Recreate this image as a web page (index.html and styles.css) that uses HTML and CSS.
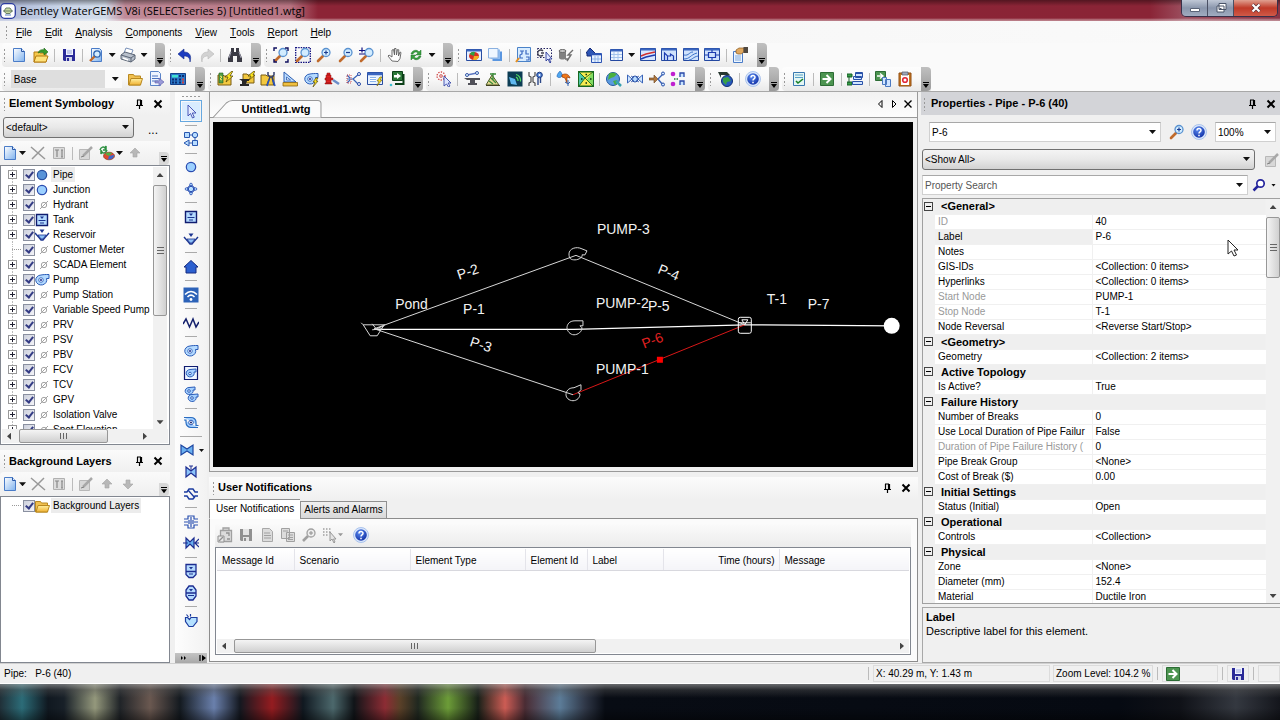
FILE: index.html
```html
<!DOCTYPE html>
<html lang="en">
<head>
<meta charset="utf-8">
<title>Bentley WaterGEMS V8i (SELECTseries 5) [Untitled1.wtg]</title>
<link rel="stylesheet" href="styles.css">
</head>
<body>
<svg class="defs" aria-hidden="true">
<defs>
<linearGradient id="g-page" x1="0" y1="0" x2="1" y2="1"><stop offset="0" stop-color="#fff"/><stop offset="1" stop-color="#7fb2ee"/></linearGradient>
<linearGradient id="g-fold" x1="0" y1="0" x2="0" y2="1"><stop offset="0" stop-color="#fff0a0"/><stop offset="1" stop-color="#f0b030"/></linearGradient>
<radialGradient id="g-help" cx=".4" cy=".3" r=".8"><stop offset="0" stop-color="#5c8cf0"/><stop offset="1" stop-color="#0a28a0"/></radialGradient>
</defs>
<symbol id="new" viewBox="0 0 16 16"><path d="M2.500 1.500h8l3 3v10h-11z" fill="url(#g-page)" stroke="#4a7cc8"/><path d="M10.500 1.500v3h3" fill="#dceaff" stroke="#2a58a8"/></symbol>
<symbol id="open" viewBox="0 0 16 16"><path d="M1 5h5l1 1h6v9H1z" fill="#f5c94c" stroke="#b47a10"/><path d="M3 9h12l-2 6H1z" fill="#ffe27a" stroke="#b47a10"/><path d="M5 6c1-3 4-4 6-3V1l4 4-4 3V6c-2-1-4-1-6 0z" fill="#3a9a2a" stroke="#1c6a18" stroke-width=".6"/></symbol>
<symbol id="save" viewBox="0 0 16 16"><path d="M2 2h12v12H3l-1-1z" fill="#2a2a98"/><path d="M5 2h7v6H5z" fill="#eef2ff"/><path d="M6 4h5M6 6h5" stroke="#9aa4d8"/><path d="M5 10h6v4H5z" fill="#cfd4ea"/><path d="M6 11h2v3H6z" fill="#2a2a98"/></symbol>
<symbol id="save-g" viewBox="0 0 16 16"><path d="M2 2h12v12H3l-1-1z" fill="#909090"/><path d="M5 2h6v6H5zM5 10h6v4H5z" fill="#e4e4e4"/><path d="M6 11h2v3H6z" fill="#909090"/></symbol>
<symbol id="preview" viewBox="0 0 16 16"><path d="M3.500 1.500h8l2 2v11h-10z" fill="url(#g-page)" stroke="#4a7cc8"/><circle cx="9" cy="7" r="3.200" fill="#d4ecff" stroke="#2a62b0" stroke-width="1.300"/><path d="M6.500 9.500L2 14" stroke="#c06a2c" stroke-width="2.400"/></symbol>
<symbol id="print" viewBox="0 0 16 16"><path d="M6 1l7 2-2 5-7-2z" fill="#fff" stroke="#7890b8"/><path d="M1 8l4-3 10 3v4l-4 3L1 12z" fill="#b8c0cc" stroke="#5a6474"/><path d="M1 8l10 3 4-3M11 11v4" fill="none" stroke="#5a6474"/><path d="M3 11l5 2" stroke="#fff" stroke-width="1.500"/></symbol>
<symbol id="undo" viewBox="0 0 16 16"><path d="M1 7l6-5v3c5 0 8 3 6 10 0-4-2-6-6-6v3z" fill="#1c3cc0" stroke="#102a88" stroke-width=".6"/></symbol>
<symbol id="redo" viewBox="0 0 16 16"><path d="M15 7L9 2v3C4 5 1 8 3 15c0-4 2-6 6-6v3z" fill="#d2d2d2" stroke="#b8b8b8" stroke-width=".6"/></symbol>
<symbol id="find" viewBox="0 0 16 16"><path d="M4 1h3v4h2V1h3v3l3 7v4h-5V9H6v6H1v-4l3-7z" fill="#3a3a44"/><path d="M4 5l-2 6M12 5l2 6" stroke="#9a9aaa"/></symbol>
<symbol id="lens" viewBox="0 0 16 16"><path d="M7 9L2 14" stroke="#c06a2c" stroke-width="2.600" stroke-linecap="round"/><circle cx="10" cy="5.500" r="4" fill="#d2ecff" stroke="#5a92d0" stroke-width="1.300"/></symbol>
<symbol id="zoom-ext" viewBox="0 0 16 16"><use href="#lens"/><path d="M1 4V1h3M12 1h3v3M15 12v3h-3M4 15H1v-3" fill="none" stroke="#101060" stroke-width="1.400"/></symbol>
<symbol id="zoom-win" viewBox="0 0 16 16"><path d="M.7.700h14.600v14.600H.7z" fill="none" stroke="#101080" stroke-width="1.300" stroke-dasharray="1.500 1"/><use href="#lens"/></symbol>
<symbol id="zoom-in" viewBox="0 0 16 16"><use href="#lens"/><path d="M8 5.500h4M10 3.500v4" stroke="#1c3c90" stroke-width="1.200"/></symbol>
<symbol id="zoom-out" viewBox="0 0 16 16"><use href="#lens"/><path d="M8 5.500h4" stroke="#1c3c90" stroke-width="1.200"/></symbol>
<symbol id="zoom-rt" viewBox="0 0 16 16"><use href="#lens"/><path d="M0 3.500h6M3 .5v5M0 7h6" stroke="#101080" stroke-width="1.200"/></symbol>
<symbol id="zoom-g" viewBox="0 0 16 16"><path d="M7 9L2 14" stroke="#a0a0a0" stroke-width="2.600"/><circle cx="10" cy="6" r="4" fill="#eee" stroke="#a0a0a0" stroke-width="1.300"/><path d="M8 6h4M10 4v4" stroke="#909090"/></symbol>
<symbol id="pan" viewBox="0 0 16 16"><path d="M5 14l-4-5 1-1 3 2V3l1.500-.5L7.500 8V1.500H9L9.500 8l1-5.500 1.300.3L11.500 9l1.500-4 1 .5-1 6-2 3z" fill="#fff" stroke="#606060" stroke-width=".9"/></symbol>
<symbol id="refresh" viewBox="0 0 16 16"><path d="M3 7c1-4 6-5 8-2l2-2v5H8l2-2C8 4 6 5 5 7zM13 9c-1 4-6 5-8 2l-2 2V8h5l-2 2c2 2 4 1 5-1z" fill="#3aa040" stroke="#1c7028" stroke-width=".5"/></symbol>
<symbol id="color" viewBox="0 0 16 16"><path d="M.5 2.500h15v11H.5z" fill="#e8f0ff" stroke="#284ca0"/><path d="M.5 2.500h15v2H.5z" fill="#3a66c0"/><ellipse cx="8" cy="9" rx="5" ry="4" fill="#d83020"/><path d="M8 9L3.500 7A5 4 0 0 1 9 5z" fill="#30a040"/><path d="M8 9l5 0a5 4 0 0 1-6 4z" fill="#f0b020"/></symbol>
<symbol id="layers" viewBox="0 0 16 16"><path d="M5.500 4.500h9.500v9.500H5.500z" fill="#5a96e0"/><path d="M3.500 2.500h9.500v9.500H3.500z" fill="#8fbcf0"/><path d="M1.500 1.500h9.500v9.500H1.500z" fill="#eef6ff" stroke="#8ab0e0"/></symbol>
<symbol id="model" viewBox="0 0 16 16"><path d="M2.500.5h13v14h-13z" fill="#d8ecff" stroke="#4a82c8"/><path d="M5 4h4M7 4v3l-2 1v3h3M11 3v4h3M11 10h3v3h-3" fill="none" stroke="#3a68c0" stroke-width="1.200"/><path d="M4 11l-3 4" stroke="#e89020" stroke-width="2"/></symbol>
<symbol id="select-poly" viewBox="0 0 16 16"><path d="M.5 1.500h14v9H.5z" fill="none" stroke="#202060" stroke-dasharray="1.500 1.500"/><path d="M6 4a3 3 0 1 0 0 4M4 6h3" fill="none" stroke="#404050" stroke-width="1.300"/><path d="M9 5v9l2-2 2 4 1-1-2-3h3z" fill="#dfe6ff" stroke="#2a3a98" stroke-width=".9"/></symbol>
<symbol id="tank-bolt" viewBox="0 0 16 16"><path d="M1 4v7c1 2 6 2 7 0V4z" fill="#808080"/><ellipse cx="4.500" cy="4" rx="3.500" ry="1.500" fill="#c8c8c8" stroke="#666"/><path d="M15 3l-5 5h3l-4 6M7 12h4" fill="none" stroke="#707070" stroke-width="1.400"/></symbol>
<symbol id="house-table" viewBox="0 0 16 16"><path d="M0 6l4-5 5 5H8v3H1V6z" fill="#2c54b4" stroke="#142a78"/><path d="M5.500 6.500h10v9h-10z" fill="#e4f0ff" stroke="#2c54b4"/><path d="M5.500 7.500h10" stroke="#2c54b4" stroke-width="1.600"/><path d="M9 9v6M12 9v6M6 12h9" stroke="#7fa4e0" stroke-width=".8"/></symbol>
<symbol id="table" viewBox="0 0 16 16"><path d="M2.500 2.500h12v11h-12z" fill="#eef6ff" stroke="#2448a0"/><path d="M2.500 3.500h12" stroke="#3a66c0" stroke-width="2"/><path d="M6 5v8M10 5v8M3 7.500h11M3 10.500h11" stroke="#a4c4ec"/></symbol>
<symbol id="graph" viewBox="0 0 16 16"><path d="M.5 1.500h15v12H.5z" fill="#d8e8ff" stroke="#2448a0"/><path d="M.5 2.500h15" stroke="#3a66c0" stroke-width="2"/><path d="M1 9l5-2 9-2" stroke="#d03030" stroke-width="1.400" fill="none"/><path d="M1 12l5-2 9-2" stroke="#1c3cb0" fill="none" stroke-width="1.400"/></symbol>
<symbol id="profile" viewBox="0 0 16 16"><path d="M.5 1.500h15v12H.5z" fill="#cfe2fc" stroke="#2448a0"/><path d="M.5 2.500h15" stroke="#3a66c0" stroke-width="2"/><path d="M3.500 13V6l3 3h3v-2l3 2v4M6.500 9v4" stroke="#1c3cb0" fill="none" stroke-width="1.200"/></symbol>
<symbol id="contour" viewBox="0 0 16 16"><path d="M.5 1.500h15v12H.5z" fill="#cfe2fc" stroke="#2448a0"/><path d="M.5 2.500h15" stroke="#3a66c0" stroke-width="2"/><path d="M1 8c5 1 5-3 9-3M1 12c6 0 6-4 13-6M6 13c3 0 4-3 9-4" stroke="#3a72c8" fill="none"/></symbol>
<symbol id="aerial" viewBox="0 0 16 16"><path d="M.5 1.500h15v12H.5z" fill="#cfe2fc" stroke="#2448a0"/><path d="M.5 2.500h15" stroke="#3a66c0" stroke-width="2"/><path d="M4.500 5.500h7v5h-7zM8 3v3M8 10v3M1 8h3M12 8h3" stroke="#1c3cb0" fill="none" stroke-width="1.200"/></symbol>
<symbol id="props" viewBox="0 0 16 16"><path d="M1.500 4.500h9v11h-9z" fill="#eef6ff" stroke="#4a7cc8"/><path d="M3 9h6M3 11h6M3 13h6" stroke="#7fa8dc"/><path d="M4 3l3-2h5v4l-3 2H6L4 6z" fill="#e0a860" stroke="#8a5a20" stroke-width=".7"/><path d="M11.500 0H16v6h-4.500z" fill="#504840"/></symbol>
<symbol id="folder" viewBox="0 0 16 16"><path d="M1.500 3.500h5l1 1.500h6v9h-12z" fill="#f0c050" stroke="#b88820"/><path d="M4 7.500h11.500l-2 6.500H2z" fill="url(#g-fold)" stroke="#b88820"/></symbol>
<symbol id="alt" viewBox="0 0 16 16"><path d="M2.500.5h8l2 2v12h-10z" fill="#eef4ff" stroke="#5a84c8"/><path d="M4 5h6M4 7.500h7M4 10h6" stroke="#4a72c0"/><path d="M7 10h4V7l5 4-5 4v-3H7z" fill="#9a9ad8" stroke="#5a5aa8" stroke-width=".6"/></symbol>
<symbol id="calc" viewBox="0 0 16 16"><path d="M.5 2.500h15v11H.5z" fill="#2a78c8" stroke="#14408a"/><path d="M2 4h6v2.500H2z" fill="#40e0d0"/><path d="M2 8.500h2M5 8.500h2M9 5h2M12 5h2M9 8.500h2M2 11.500h2M5 11.500h2M9 11.500h2" stroke="#0c2c70" stroke-width="1.800"/><path d="M12 8.500h2M12 11.500h2" stroke="#d04040" stroke-width="1.800"/></symbol>
<symbol id="fold-bolt" viewBox="0 0 16 16"><path d="M1 4h5l1 1h7v9H1z" fill="#f2c840" stroke="#7a5c10"/><path d="M2 2h4v10H2z" fill="#54a048" stroke="#24601c" stroke-width=".6"/><path d="M3 5l2 1-2 2 2 1" stroke="#ffe860" fill="none"/><path d="M15 0L8 6h3l-2 5 7-6h-3l3-5z" fill="#ffe820" stroke="#4a3c08" stroke-width=".7"/></symbol>
<symbol id="anvil-bolt" viewBox="0 0 16 16"><path d="M4 3h4l1 1h6v8H4z" fill="#f2c840" stroke="#7a5c10"/><path d="M0 8h10v2H8l-1 3h3v2H1v-2h2V10z" fill="#282828"/><path d="M15 0L9 5h3l-2 4 6-5h-2l2-4z" fill="#ffe820" stroke="#4a3c08" stroke-width=".7"/></symbol>
<symbol id="fold-gear" viewBox="0 0 16 16"><path d="M1 4h5l1 1h7v9H1z" fill="#f2c840" stroke="#7a5c10"/><path d="M8 1v3l2 2h2l2-2V1M10 6l-3 8M12 6l2 8" stroke="#34406c" stroke-width="1.500" fill="none"/><path d="M9 9l-2 6M13 9l2 6" stroke="#2a54c0" stroke-width="1.500"/></symbol>
<symbol id="ruler" viewBox="0 0 16 16"><path d="M2 1v10h12z" fill="#bcdcff" stroke="#2a5cb0"/><path d="M4.500 6v3h4z" fill="#fff" stroke="#2a5cb0" stroke-width=".8"/><path d="M1 11.500h14.500V15H1z" fill="#f0c040" stroke="#8a6410" stroke-width=".8"/></symbol>
<symbol id="pump" viewBox="0 0 16 16"><path d="M15 2.500v4h-2.500A5.500 5 0 1 1 7 3c3-.5 4-.5 8-.5z" fill="#b4daff" stroke="#2a5cb8"/><circle cx="7" cy="8" r="2.300" fill="#e8f4ff" stroke="#2a5cb8" stroke-width=".8"/><circle cx="7" cy="8" r="1" fill="#1c2c8c"/></symbol>
<symbol id="pump-bolt" viewBox="0 0 16 16"><use href="#pump"/><path d="M13 7l-3 4h2l-2 5 5-6h-2l2-3z" fill="#ffe820" stroke="#5a4a10" stroke-width=".7"/></symbol>
<symbol id="hydrant" viewBox="0 0 16 16"><path d="M2 4h5v8H2zM1 7h8v2H1zM3 2h3v2H3zM1 12h7v1H1z" fill="#e02020" stroke="#901010" stroke-width=".5"/><path d="M9 9l6 4" stroke="#6a8cc8" stroke-width="2.500"/></symbol>
<symbol id="segments" viewBox="0 0 16 16"><path d="M1 8h6M7 8l6-5M7 8l6 6M1 4l3 3M1 12l3-3" stroke="#3a64b8" fill="none" stroke-width="1.200"/><path d="M1 4h4v8H1z" fill="none" stroke="#d05050" stroke-dasharray="1 1"/><circle cx="13" cy="3" r="1.500" fill="#fff" stroke="#2a4ca8"/><circle cx="13" cy="13" r="1.500" fill="#fff" stroke="#2a4ca8"/></symbol>
<symbol id="scada-t" viewBox="0 0 16 16"><path d="M.5 1.500h15v12H.5z" fill="#e8f2ff" stroke="#284ca0"/><path d="M.5 3h15" stroke="#3a66c0" stroke-width="2.500"/><path d="M3 6h6v5H3z" fill="#8ab4ea"/><path d="M3 7.500h6M3 9.500h6" stroke="#fff"/><path d="M13 6l-3 4h2l-2 5 5-6h-2l2-3z" fill="#ffe820" stroke="#6a5a10" stroke-width=".6"/></symbol>
<symbol id="export-g" viewBox="0 0 16 16"><path d="M3.500.5h10v9h-10z" fill="#2c7838" stroke="#0c4018"/><path d="M14.500 3v10H6" fill="none" stroke="#0c4018" stroke-width="2"/><path d="M5 4h3V2l4 3-4 3V6.500H5z" fill="#fff"/><circle cx="2" cy="14" r="1.300" fill="#40c0d0"/></symbol>
<symbol id="sel-red" viewBox="0 0 16 16"><circle cx="5" cy="5" r="4" fill="none" stroke="#d04040" stroke-width="1.300" stroke-dasharray="1.300 1.300"/><circle cx="5" cy="5" r="1.500" fill="#f0b0b0" stroke="#c04040" stroke-width=".6"/><path d="M8 5v10l2.500-2 2 3 1.500-1-2-3h3z" fill="#dfe6ff" stroke="#3a4aa8" stroke-width=".9"/></symbol>
<symbol id="anvil" viewBox="0 0 16 16"><path d="M3 4l10-2" stroke="#5a74c0" stroke-width="1.300"/><circle cx="3" cy="4" r="1.500" fill="#dff" stroke="#3a54a8"/><circle cx="13" cy="2" r="1.500" fill="#dff" stroke="#3a54a8"/><path d="M0 7h16v2h-5v3h2v2H4v-2h2V9H3z" fill="#505058"/></symbol>
<symbol id="terrain" viewBox="0 0 16 16"><path d="M1 14L7 4l7 10z" fill="#e4d890" stroke="#4a5a28"/><path d="M4 10l4 3M6 7l5 5M8 2v7M5 3h6" stroke="#3a8a3a" stroke-width="1.300"/><path d="M1 14.500h14" stroke="#404020"/></symbol>
<symbol id="satellite" viewBox="0 0 16 16"><path d="M.5.500h15v15H.5z" fill="#0c3c54"/><path d="M2 6l6 2 2 6-6-1z" fill="#60b8f0"/><path d="M9 6a4 4 0 0 1 2 4M9 3.500a6 6 0 0 1 4.500 7" fill="none" stroke="#50d860" stroke-width="1.200"/></symbol>
<symbol id="wrench" viewBox="0 0 16 16"><path d="M1 1v4l2 1v5l-2 1v3M7 1v4L5 6v5l2 1v3" fill="none" stroke="#404040" stroke-width="1.100"/><circle cx="11.500" cy="4" r="2.800" fill="#4a7cd0" stroke="#1c3a80"/><circle cx="11.500" cy="4" r="1" fill="#fff"/><path d="M10 7v7M12.500 7v5" stroke="#2c4888" stroke-width="1.400"/></symbol>
<symbol id="fire" viewBox="0 0 16 16"><path d="M1 5c0-2 3-5 3-5s3 3 2 5-5 2-5 0z" fill="#50a8f0" stroke="#1c5cb0" stroke-width=".6"/><path d="M6 4c3-2 7-1 8 3l-3-1v6l-2-5-3-1z" fill="#f07818" stroke="#903808" stroke-width=".7"/><path d="M9 11l3 2 2-2M12 9v6" stroke="#3060b0" fill="none"/></symbol>
<symbol id="map" viewBox="0 0 16 16"><path d="M.7.700h14.600v14.600H.7z" fill="#f8ec50" stroke="#186820" stroke-width="1.400"/><path d="M1 1l6 6-6 8z" fill="#50c8a8"/><path d="M15 15L9 8l6-7z" fill="#80dc60"/><path d="M1 1l6 6-6 8M15 1L7 7l8 8" fill="none" stroke="#186820" stroke-width=".9"/><path d="M3 8h1.500M7.500 3.500h1.500M12 8h1.500M7.500 12h1.500" stroke="#083010" stroke-width="1.500"/></symbol>
<symbol id="globe" viewBox="0 0 16 16"><circle cx="7" cy="8" r="6.500" fill="#5a9ae0" stroke="#2458a0"/><path d="M3 3c3-2 5-1 8 0l-3 3-3 1-3 2zM7 10l4-1 1 3-3 2z" fill="#4ab040"/><path d="M10 10l5 5" stroke="#38a0b0" stroke-width="2.500"/></symbol>
<symbol id="node-net" viewBox="0 0 16 16"><path d="M.5 4v8l4.500-4zM15.500 4v8L11 8z" fill="#d0e6ff" stroke="#3a64b8"/><circle cx="8" cy="8" r="3" fill="#b8dcff" stroke="#2a50a8"/><path d="M4 5l3 2M12 5l-3 2M4 11l3-2M12 11l-3-2" stroke="#2a50a8" stroke-width=".8"/></symbol>
<symbol id="split" viewBox="0 0 16 16"><path d="M0 7h5V4l4 4-4 4V9H0z" fill="#b07840" stroke="#6a4018" stroke-width=".6"/><path d="M9 8l5-5M9 8l5 6" stroke="#3a64b8" stroke-width="1.400"/><circle cx="14" cy="2.500" r="1.500" fill="#cfe6ff" stroke="#2a50a8"/><circle cx="14" cy="13.500" r="1.500" fill="#cfe6ff" stroke="#2a50a8"/></symbol>
<symbol id="magenta" viewBox="0 0 16 16"><circle cx="3" cy="3" r="2.300" fill="#c020d0"/><circle cx="3" cy="13" r="2.300" fill="#c020d0"/><path d="M4 8h4" stroke="#208040" stroke-width="1.500" stroke-dasharray="1.500 1"/><path d="M10 6V2h4v4M10 14v-4h4v4" fill="#c8e4ff" stroke="#2848a8" stroke-width="1.300"/></symbol>
<symbol id="reuse" viewBox="0 0 16 16"><path d="M1 1h9l3 3-3 2 2-2H4v3z" fill="#283830"/><circle cx="10" cy="10" r="5.500" fill="#2858c0" stroke="#103070"/><path d="M6 7l5-1 3 4-4 1-1 3-3-3z" fill="#38a048"/></symbol>
<symbol id="help" viewBox="0 0 16 16"><circle cx="8" cy="8" r="7.500" fill="#dbe8fc" stroke="#9ab8e8" stroke-width=".8"/><circle cx="8" cy="8" r="5.800" fill="url(#g-help)"/><path d="M6 6.500c0-2.500 4-2.500 4-.2C10 8 8 7.700 8 9.500M8 10.700v1.500" fill="none" stroke="#fff" stroke-width="1.500"/></symbol>
<symbol id="check" viewBox="0 0 16 16"><path d="M2.500 1.500h11v13h-11z" fill="#e4f6f4" stroke="#3a78b0"/><path d="M4 4h8M4 6.500h8" stroke="#58a0c8"/><path d="M5 10l2 2 5-4" fill="none" stroke="#188028" stroke-width="1.600"/></symbol>
<symbol id="go" viewBox="0 0 16 16"><path d="M1.500 1.500h13v13h-13z" fill="#4c9450" stroke="#2c6c34"/><path d="M3.500 8h7M7.500 4l4 4-4 4" fill="none" stroke="#fff" stroke-width="2"/></symbol>
<symbol id="scen-cmp" viewBox="0 0 16 16"><path d="M0 3h5v3H0zM0 11h5v3H0zM2 5v7" fill="#38a048" stroke="#186028"/><path d="M6.500 5.500h8v3h-8zM5.500 10.500h10v3h-10zM8.500 1.500h7v5h-7z" fill="#d0e4ff" stroke="#2850a8"/><path d="M8.500 2.500h7" stroke="#2850a8"/></symbol>
<symbol id="go-copy" viewBox="0 0 16 16"><path d="M.5.500h10v9H.5z" fill="#4c9450" stroke="#2c6c34"/><path d="M2 5h6M5 2.500L8 5 5 7.500" fill="none" stroke="#fff" stroke-width="1.400"/><path d="M7.500 6.500h4v7h-4zM10.500 8.500h5v7h-5z" fill="#d0e4ff" stroke="#4a78c0"/></symbol>
<symbol id="clip" viewBox="0 0 16 16"><path d="M2 2h12v13H2z" fill="#c87820" stroke="#904c10"/><path d="M4 4h8v10H4z" fill="#fff"/><path d="M5 1h6v3H5z" fill="#a0a8b8" stroke="#505868" stroke-width=".7"/><circle cx="8" cy="9" r="2.300" fill="none" stroke="#e02838" stroke-width="1.600"/></symbol>
<symbol id="del" viewBox="0 0 16 16"><path d="M1 2l14 12M14 2L2 14" stroke="#989898" stroke-width="1.500"/></symbol>
<symbol id="rename" viewBox="0 0 16 16"><path d="M2.500 2.500h11v11h-11z" fill="#dcdcdc" stroke="#b0b0b0"/><path d="M4 5h4M6 5v7M10 5h2M11 5v7M10 12h2" stroke="#888" stroke-width="1.200"/></symbol>
<symbol id="edit-g" viewBox="0 0 16 16"><path d="M1.500 4.500h10v10h-10z" fill="#d8d8d8" stroke="#b8b8b8"/><path d="M5 11l9-9" stroke="#a8a8a8" stroke-width="2.500"/><path d="M3 12l3-1" stroke="#808080"/></symbol>
<symbol id="colorize" viewBox="0 0 16 16"><path d="M1 5c1-3 4-4 5-2l1-2v4H4M8 5C7 8 4 9 3 7L2 9V5" fill="none" stroke="#2c9040" stroke-width="1.500"/><ellipse cx="10" cy="11" rx="5.500" ry="3.800" fill="#e04830" stroke="#703018" stroke-width=".6"/><path d="M10 11l5-1c0 3-2 4-6 4.500z" fill="#3a68d0"/><path d="M10 11L6 9c2-2 5-2 7-.8z" fill="#50b040"/></symbol>
<symbol id="up" viewBox="0 0 16 16"><path d="M8 3l5 5h-3v4H6V8H3z" fill="#b8b8b8" stroke="#a4a4a4" stroke-width=".6"/></symbol>
<symbol id="down" viewBox="0 0 16 16"><path d="M8 13L3 8h3V4h4v4h3z" fill="#b8b8b8" stroke="#a4a4a4" stroke-width=".6"/></symbol>
<symbol id="arrow" viewBox="0 0 16 16"><path d="M5 2v11l2.500-2.500L9.500 15l1.800-.8-2-4.200H13z" fill="#e4ecff" stroke="#3a4ab0" stroke-width=".9"/></symbol>
<symbol id="layout" viewBox="0 0 16 16"><path d="M1.500 1.500h5v5h-5zM9.500 9.500h5v5h-5z" fill="#b8dcff" stroke="#2a58b0"/><circle cx="12" cy="4" r="2.700" fill="#b8dcff" stroke="#2a58b0"/><path d="M6 4h3M12 7v3M9 12H6M6 9v6l-5-3z" fill="#b8dcff" stroke="#2a58b0"/></symbol>
<symbol id="junction" viewBox="0 0 16 16"><circle cx="8" cy="8" r="4.700" fill="#9cd0ff" stroke="#2a4cb0" stroke-width="1.200"/></symbol>
<symbol id="pipe" viewBox="0 0 16 16"><circle cx="8" cy="8" r="4.700" fill="#5a94d8" stroke="#2a50a0" stroke-width="1.200"/></symbol>
<symbol id="cross" viewBox="0 0 16 16"><path d="M8 3l2 2.500L13 8l-3 2.500L8 13l-2-2.500L3 8l3-2.500z" fill="#9cd0ff" stroke="#2a4cb0"/><circle cx="8" cy="8" r="2.700" fill="#b8e0ff" stroke="#2a4cb0"/><g fill="#b8e0ff" stroke="#2a4cb0" stroke-width=".8"><circle cx="8" cy="3.500" r="1.300"/><circle cx="8" cy="12.500" r="1.300"/><circle cx="3.500" cy="8" r="1.300"/><circle cx="12.500" cy="8" r="1.300"/></g></symbol>
<symbol id="tank" viewBox="0 0 16 16"><path d="M2.500 2.500h11v11h-11z" fill="#b4daff" stroke="#101c70" stroke-width="1.400"/><path d="M6 4.500h4L8 7z" fill="#1c3490"/><path d="M4.500 8.500h7M6 11h4" stroke="#1c3490" stroke-width="1.200"/></symbol>
<symbol id="reservoir" viewBox="0 0 16 16"><path d="M1 6l4 4.500 2 2.500h2l2-2.500L15 6" fill="none" stroke="#1c3490" stroke-width="1.400"/><path d="M4 8h8l-3 4H7z" fill="#8cc0f8" stroke="#1c3490" stroke-width=".8"/><path d="M5.500 2.500h5L8 6z" fill="#1c3490"/></symbol>
<symbol id="house" viewBox="0 0 16 16"><path d="M8 1.500L15 8h-2v6H3V8H1z" fill="#2c60d0" stroke="#142a80"/></symbol>
<symbol id="scada" viewBox="0 0 16 16"><path d="M.5.500h15v15H.5z" fill="#2c62b8"/><path d="M2 7.500c4-4 8-4 12 0M4.500 10c2.500-2.500 4.500-2.500 7 0" fill="none" stroke="#fff" stroke-width="1.600"/><circle cx="8" cy="12.500" r="1.400" fill="#fff"/></symbol>
<symbol id="zigzag" viewBox="0 0 16 16"><path d="M0 9l3-5 3.500 8L10 4l3 8 3-5" fill="none" stroke="#14206c" stroke-width="1.500"/></symbol>
<symbol id="pump-box" viewBox="0 0 16 16"><path d="M1.500 1.500h13v13h-13z" fill="#eef6ff" stroke="#101c70" stroke-width="1.200"/><path d="M13 4v3h-2A4 3.700 0 1 1 7 4.500z" fill="#a4d0ff" stroke="#2a5cb8"/><circle cx="7" cy="8.500" r="1.300" fill="#fff" stroke="#2a5cb8"/></symbol>
<symbol id="pumps" viewBox="0 0 16 16"><path d="M12 1v3h-2A4 3.500 0 1 1 6 1.500zM15 8v3h-2A4 3.500 0 1 1 9 8.500z" fill="#a4d0ff" stroke="#2a5cb8"/><circle cx="6" cy="5" r="1.300" fill="#fff" stroke="#2a5cb8"/><circle cx="9" cy="12" r="1.300" fill="#fff" stroke="#2a5cb8"/></symbol>
<symbol id="turbine" viewBox="0 0 16 16"><path d="M1 3.500h7a5 4.500 0 0 1 5 4.500v3.500h2.500M15 13.500H8A5 5 0 0 1 3 8.500V6H1" fill="#a4d0ff" stroke="#2a6cc0" stroke-width="1.200"/><circle cx="8" cy="8.500" r="2.300" fill="#fff" stroke="#2a5cb8"/><circle cx="8" cy="8.500" r="1" fill="#14206c"/></symbol>
<symbol id="valve" viewBox="0 0 16 16"><path d="M2 3v10l6-4 6 4V3L8 7z" fill="#6ab0f0" stroke="#1c44a0" stroke-width="1.200"/></symbol>
<symbol id="iso" viewBox="0 0 16 16"><path d="M3 3v10l5-4 5 4V3L8 7z" fill="#8cc4fa" stroke="#1c2c90" stroke-width="1.200"/><path d="M6 2h4M8 2v5" fill="none" stroke="#1c2c90"/></symbol>
<symbol id="gpv" viewBox="0 0 16 16"><path d="M1 6h3l2-3h4l2 3h3M1 10h3l2 3h4l2-3h3M5 4l7 8" fill="none" stroke="#1c3ca0" stroke-width="1.400"/></symbol>
<symbol id="orifice" viewBox="0 0 16 16"><path d="M1 5h4V2h6v3h4M1 11h4v3h6v-3h4M6 6v4M10 6v4M1 8h4M11 8h4M8 3v10" fill="none" stroke="#2a50b0" stroke-width="1.200"/></symbol>
<symbol id="discharge" viewBox="0 0 16 16"><path d="M3 3v10l4-4 4 4V3L7 7z" fill="#6ab0f0" stroke="#1c2c90" stroke-width="1.200"/><path d="M0 8h5M11 8h5M12 8l4-4M12 8l4 4" stroke="#1c2c90" stroke-width="1.200"/></symbol>
<symbol id="surge" viewBox="0 0 16 16"><path d="M3 1.500h10v10l-3 3H6l-3-3zM3 8.500h10" fill="#b4daff" stroke="#1c2c90" stroke-width="1.300"/><path d="M6 4h4L8 6.500z" fill="#1c3490"/><path d="M6 11h4" stroke="#1c3490"/></symbol>
<symbol id="hydro" viewBox="0 0 16 16"><path d="M3 5l3-4h4l3 4v6l-3 4H6l-3-4zM3 8h10" fill="#b4daff" stroke="#1c2c90" stroke-width="1.300"/><path d="M6 4h4L8 6.500z" fill="#1c3490"/><path d="M5 10.500h6" stroke="#1c3490"/></symbol>
<symbol id="rupture" viewBox="0 0 16 16"><path d="M2.500 4.500h2l2 2 1.500-2h6v4l-4 5H6l-3.500-5zM3.500 1.500l2 2.500M7.500 1v2.500" fill="#b4e0ff" stroke="#1c3ca0" stroke-width="1.200"/></symbol>
<symbol id="none" viewBox="0 0 16 16"><circle cx="10" cy="8" r="2.700" fill="none" stroke="#a4a4a4"/><path d="M6 12l8-8" stroke="#a4a4a4"/></symbol>
<symbol id="doc-g" viewBox="0 0 16 16"><path d="M3.500 1.500h7l3 3v10h-10z" fill="#dcdcdc" stroke="#a8a8a8"/><path d="M5 6h6M5 8.500h7M5 11h7" stroke="#a0a0a0"/></symbol>
<symbol id="copy-g" viewBox="0 0 16 16"><path d="M1.500 1.500h8v10h-8zM6.500 5.500h8v9h-8z" fill="#dcdcdc" stroke="#a0a0a0"/><path d="M3 4h5M8 8h5M8 10.500h5M8 12.500h5" stroke="#a0a0a0"/></symbol>
<symbol id="toolbox-g" viewBox="0 0 16 16"><path d="M3.500 3.500h11v11h-11zM6 3V1h6v2" fill="#dcdcdc" stroke="#a0a0a0" stroke-width="1.300"/><path d="M1 9h6v6H1z" fill="#e8e8e8" stroke="#909090"/><path d="M9 6h3v3M2 14l4-4M10 12h3" stroke="#909090" stroke-width="1.300" fill="none"/></symbol>
<symbol id="sel-g" viewBox="0 0 16 16"><path d="M1 2h8M1 5h8M1 8h5" stroke="#a0a0a0" stroke-width="1.500" stroke-dasharray="1.500 1.500"/><path d="M8 5v9l2-2 2 4 1-1-1.500-3H14z" fill="#e4e4e4" stroke="#989898"/></symbol>
<symbol id="search" viewBox="0 0 16 16"><path d="M7 9l-4.500 4.500" stroke="#24249c" stroke-width="2.500"/><circle cx="9.500" cy="6.500" r="3.700" fill="#fff" stroke="#24249c" stroke-width="1.700"/></symbol>
<symbol id="pin" viewBox="0 0 16 16"><path d="M6 4h4M6.500 4v5M9.500 4v5M10.500 4v5M5 9.500h7M8.500 10v3" stroke="#000" fill="none" stroke-width="1.200"/></symbol>
<symbol id="x" viewBox="0 0 16 16"><path d="M4.500 4.500l7 7M11.500 4.500l-7 7" stroke="#000" stroke-width="2"/></symbol>
<symbol id="x-thin" viewBox="0 0 16 16"><path d="M4.500 4.500l7 7M11.500 4.500l-7 7" stroke="#000" stroke-width="1.400"/></symbol>
<symbol id="prev" viewBox="0 0 16 16"><path d="M10 4.500v7L6.500 8z" fill="none" stroke="#000"/></symbol>
<symbol id="next" viewBox="0 0 16 16"><path d="M6.500 4.500v7L10 8z" fill="none" stroke="#000"/></symbol>
<symbol id="app" viewBox="0 0 16 16"><rect x=".7" y=".7" width="14.600" height="14.600" rx="4" fill="#fff" stroke="#2a3aa0" stroke-width="1.300"/><path d="M3 8h10M4 8l2-3h4l2 3-2 2.500H6z" fill="#c8d8a0" stroke="#6a8068"/><path d="M5 12h6" stroke="#5a80c0"/></symbol>
</svg>

<header class="titlebar">
  <svg class="i"><use href="#app"/></svg>
  <h1>Bentley WaterGEMS V8i (SELECTseries 5) [Untitled1.wtg]</h1>
  <div class="winbtns">
    <button aria-label="Minimize"><svg viewBox="0 0 16 12"><path d="M3.500 6.500h9v3h-9z" fill="#fff" stroke="#5a6478"/></svg></button>
    <button aria-label="Restore"><svg viewBox="0 0 16 12"><path d="M6 1.500h7v6H6zM4 4h7v6H4z" fill="#fff" stroke="#4a5468"/><path d="M6.500 6h2v2h-2z" fill="#4a5468"/></svg></button>
    <button class="close" aria-label="Close"><svg viewBox="0 0 16 12"><path d="M4.500 2.500l7 7M11.500 2.500l-7 7" stroke="#5a3038" stroke-width="3.600"/><path d="M4.500 2.500l7 7M11.500 2.500l-7 7" stroke="#fff" stroke-width="2.200"/></svg></button>
  </div>
</header>

<nav class="menubar">
  <i class="grip"></i>
  <button><u>F</u>ile</button><button><u>E</u>dit</button><button><u>A</u>nalysis</button><button><u>C</u>omponents</button><button><u>V</u>iew</button><button><u>T</u>ools</button><button><u>R</u>eport</button><button><u>H</u>elp</button>
</nav>

<div class="toolrow toolrow-1">
  <div class="bar"><i class="grip"></i>
    <button aria-label="New"><svg class="i"><use href="#new"/></svg></button><button aria-label="Open"><svg class="i"><use href="#open"/></svg></button><i class="sep"></i><button aria-label="Save"><svg class="i"><use href="#save"/></svg></button><i class="sep"></i><button aria-label="Print preview"><svg class="i"><use href="#preview"/></svg></button><i class="dd"></i><button aria-label="Print"><svg class="i"><use href="#print"/></svg></button><i class="dd"></i><i class="more"></i></div>
  <div class="bar"><i class="grip"></i>
    <button aria-label="Undo"><svg class="i"><use href="#undo"/></svg></button><button aria-label="Redo"><svg class="i"><use href="#redo"/></svg></button><i class="sep"></i><button aria-label="Find"><svg class="i"><use href="#find"/></svg></button><i class="more"></i></div>
  <div class="bar"><i class="grip"></i>
    <button aria-label="Zoom extents"><svg class="i"><use href="#zoom-ext"/></svg></button><button aria-label="Zoom window"><svg class="i"><use href="#zoom-win"/></svg></button><button aria-label="Zoom in"><svg class="i"><use href="#zoom-in"/></svg></button><button aria-label="Zoom out"><svg class="i"><use href="#zoom-out"/></svg></button><button aria-label="Realtime zoom"><svg class="i"><use href="#zoom-rt"/></svg></button><i class="sep"></i><button aria-label="Pan"><svg class="i"><use href="#pan"/></svg></button><button aria-label="Refresh"><svg class="i"><use href="#refresh"/></svg></button><i class="dd"></i><i class="more"></i></div>
  <div class="bar"><i class="grip"></i>
    <button aria-label="Element symbology"><svg class="i"><use href="#color"/></svg></button><button aria-label="Background layers"><svg class="i"><use href="#layers"/></svg></button><i class="sep"></i><button aria-label="Network navigator"><svg class="i"><use href="#model"/></svg></button><button aria-label="Selection sets"><svg class="i"><use href="#select-poly"/></svg></button><button aria-label="Queries"><svg class="i"><use href="#tank-bolt"/></svg></button><i class="sep"></i><button aria-label="Prototypes"><svg class="i"><use href="#house-table"/></svg></button><button aria-label="FlexTables"><svg class="i"><use href="#table"/></svg></button><i class="dd"></i><button aria-label="Graphs"><svg class="i"><use href="#graph"/></svg></button><button aria-label="Profiles"><svg class="i"><use href="#profile"/></svg></button><button aria-label="Contours"><svg class="i"><use href="#contour"/></svg></button><button aria-label="Aerial view"><svg class="i"><use href="#aerial"/></svg></button><i class="sep"></i><button aria-label="Properties"><svg class="i"><use href="#props"/></svg></button><i class="more"></i></div>
</div>

<div class="toolrow toolrow-2">
  <div class="bar"><i class="grip"></i>
    <span class="pick scenario"><select aria-label="Scenario"><option>Base</option></select></span><button aria-label="Scenarios"><svg class="i"><use href="#folder"/></svg></button><button aria-label="Alternatives"><svg class="i"><use href="#alt"/></svg></button><button aria-label="Calculation options"><svg class="i"><use href="#calc"/></svg></button><i class="more"></i></div>
  <div class="bar"><i class="grip"></i>
    <button aria-label="Totalizing"><svg class="i"><use href="#fold-bolt"/></svg></button><button aria-label="Skelebrator"><svg class="i"><use href="#anvil-bolt"/></svg></button><button aria-label="Energy"><svg class="i"><use href="#fold-gear"/></svg></button><button aria-label="Darwin Designer"><svg class="i"><use href="#ruler"/></svg></button><button aria-label="Pump energy"><svg class="i"><use href="#pump-bolt"/></svg></button><button aria-label="Flushing"><svg class="i"><use href="#hydrant"/></svg></button><button aria-label="Criticality"><svg class="i"><use href="#segments"/></svg></button><button aria-label="Scheduler"><svg class="i"><use href="#scada-t"/></svg></button><button aria-label="Post results"><svg class="i"><use href="#export-g"/></svg></button><i class="more"></i></div>
  <div class="bar"><i class="grip"></i>
    <button aria-label="Active topology"><svg class="i"><use href="#sel-red"/></svg></button><i class="sep"></i><button aria-label="ModelBuilder"><svg class="i"><use href="#anvil"/></svg></button><button aria-label="TRex"><svg class="i"><use href="#terrain"/></svg></button><button aria-label="SCADAConnect"><svg class="i"><use href="#satellite"/></svg></button><button aria-label="Skelebrator tools"><svg class="i"><use href="#wrench"/></svg></button><i class="sep"></i><button aria-label="LoadBuilder"><svg class="i"><use href="#fire"/></svg></button><button aria-label="Thiessen polygon"><svg class="i"><use href="#map"/></svg></button><i class="sep"></i><button aria-label="Demand control center"><svg class="i"><use href="#globe"/></svg></button><button aria-label="Unit demand"><svg class="i"><use href="#node-net"/></svg></button><button aria-label="Pressure zone"><svg class="i"><use href="#split"/></svg></button><button aria-label="Zone manager"><svg class="i"><use href="#magenta"/></svg></button><i class="more"></i></div>
  <div class="bar"><i class="grip"></i>
    <button aria-label="Web"><svg class="i"><use href="#reuse"/></svg></button><i class="sep"></i><button aria-label="Help"><svg class="i"><use href="#help"/></svg></button><i class="more"></i></div>
  <div class="bar"><i class="grip"></i>
    <button aria-label="Validate"><svg class="i"><use href="#check"/></svg></button><i class="sep"></i><button aria-label="Compute"><svg class="i"><use href="#go"/></svg></button><i class="sep"></i><button aria-label="Scenario comparison"><svg class="i"><use href="#scen-cmp"/></svg></button><i class="sep"></i><button aria-label="Batch run"><svg class="i"><use href="#go-copy"/></svg></button><button aria-label="Notifications"><svg class="i"><use href="#clip"/></svg></button><i class="more"></i></div>
</div>

<main class="work">
  <aside class="left">
    <section class="panel symb">
      <div class="head"><i class="grip"></i><h2>Element Symbology</h2><button aria-label="Pin"><svg class="i"><use href="#pin"/></svg></button><button aria-label="Close panel"><svg class="i"><use href="#x"/></svg></button></div>
      <div class="themes"><span class="pick raised"><select aria-label="Symbology"><option>&lt;default&gt;</option></select></span><button>...</button></div>
      <div class="bar mini"><button aria-label="New item"><svg class="i"><use href="#new"/></svg></button><i class="dd"></i><button aria-label="Delete"><svg class="i"><use href="#del"/></svg></button><button aria-label="Rename"><svg class="i"><use href="#rename"/></svg></button><i class="sep"></i><button aria-label="Edit"><svg class="i"><use href="#edit-g"/></svg></button><button aria-label="Refresh symbology"><svg class="i"><use href="#colorize"/></svg></button><i class="dd"></i><button aria-label="Move up"><svg class="i"><use href="#up"/></svg></button><i class="more small"></i></div>
      <div class="treebox">
        <div class="treewrap">
          <ul class="tree">
            <li><i class="exp"></i><label><input type="checkbox" checked><svg class="i"><use href="#pipe"/></svg><span class="sel">Pipe</span></label></li>
            <li><i class="exp"></i><label><input type="checkbox" checked><svg class="i"><use href="#junction"/></svg><span>Junction</span></label></li>
            <li><i class="exp"></i><label><input type="checkbox" checked><svg class="i"><use href="#none"/></svg><span>Hydrant</span></label></li>
            <li><i class="exp"></i><label><input type="checkbox" checked><svg class="i"><use href="#tank"/></svg><span>Tank</span></label></li>
            <li><i class="exp"></i><label><input type="checkbox" checked><svg class="i"><use href="#reservoir"/></svg><span>Reservoir</span></label></li>
            <li><i class="exp leaf"></i><label><input type="checkbox" checked><svg class="i"><use href="#none"/></svg><span>Customer Meter</span></label></li>
            <li><i class="exp"></i><label><input type="checkbox" checked><svg class="i"><use href="#none"/></svg><span>SCADA Element</span></label></li>
            <li><i class="exp"></i><label><input type="checkbox" checked><svg class="i"><use href="#pump"/></svg><span>Pump</span></label></li>
            <li><i class="exp"></i><label><input type="checkbox" checked><svg class="i"><use href="#none"/></svg><span>Pump Station</span></label></li>
            <li><i class="exp"></i><label><input type="checkbox" checked><svg class="i"><use href="#none"/></svg><span>Variable Speed Pump</span></label></li>
            <li><i class="exp"></i><label><input type="checkbox" checked><svg class="i"><use href="#none"/></svg><span>PRV</span></label></li>
            <li><i class="exp"></i><label><input type="checkbox" checked><svg class="i"><use href="#none"/></svg><span>PSV</span></label></li>
            <li><i class="exp"></i><label><input type="checkbox" checked><svg class="i"><use href="#none"/></svg><span>PBV</span></label></li>
            <li><i class="exp"></i><label><input type="checkbox" checked><svg class="i"><use href="#none"/></svg><span>FCV</span></label></li>
            <li><i class="exp"></i><label><input type="checkbox" checked><svg class="i"><use href="#none"/></svg><span>TCV</span></label></li>
            <li><i class="exp"></i><label><input type="checkbox" checked><svg class="i"><use href="#none"/></svg><span>GPV</span></label></li>
            <li><i class="exp"></i><label><input type="checkbox" checked><svg class="i"><use href="#none"/></svg><span>Isolation Valve</span></label></li>
            <li><i class="exp"></i><label><input type="checkbox" checked><svg class="i"><use href="#none"/></svg><span>Spot Elevation</span></label></li>
          </ul>
          <div class="vscroll tree-v"><i class="tri up"></i><i class="thumb"></i><i class="tri down"></i></div>
        </div>
        <div class="hscroll tree-h"><i class="tri lt"></i><i class="thumb"></i><i class="tri rt"></i></div>
      </div>
    </section>
    <section class="panel layers">
      <div class="head"><i class="grip"></i><h2>Background Layers</h2><button aria-label="Pin layers"><svg class="i"><use href="#pin"/></svg></button><button aria-label="Close layers"><svg class="i"><use href="#x"/></svg></button></div>
      <div class="bar mini"><button aria-label="New layer"><svg class="i"><use href="#new"/></svg></button><i class="dd"></i><button aria-label="Delete layer"><svg class="i"><use href="#del"/></svg></button><button aria-label="Rename layer"><svg class="i"><use href="#rename"/></svg></button><i class="sep"></i><button aria-label="Edit layer"><svg class="i"><use href="#edit-g"/></svg></button><button aria-label="Layer up"><svg class="i"><use href="#up"/></svg></button><button aria-label="Layer down"><svg class="i"><use href="#down"/></svg></button><i class="more small"></i></div>
      <div class="treebox"><ul class="tree"><li><i class="exp leaf"></i><label><input type="checkbox" checked><svg class="i"><use href="#folder"/></svg><span class="sel">Background Layers</span></label></li></ul></div>
    </section>
  </aside>

  <div class="strip">
    <i class="grip-h"></i>
    <div class="tools">
      <button class="on" aria-label="Select"><svg class="i"><use href="#arrow"/></svg></button><i class="hs"></i>
      <button aria-label="Layout"><svg class="i"><use href="#layout"/></svg></button><i class="hs"></i>
      <button aria-label="Junction tool"><svg class="i"><use href="#junction"/></svg></button>
      <button aria-label="Hydrant tool"><svg class="i"><use href="#cross"/></svg></button><i class="hs"></i>
      <button aria-label="Tank tool"><svg class="i"><use href="#tank"/></svg></button>
      <button aria-label="Reservoir tool"><svg class="i"><use href="#reservoir"/></svg></button><i class="hs"></i>
      <button aria-label="Customer meter tool"><svg class="i"><use href="#house"/></svg></button><i class="hs"></i>
      <button aria-label="SCADA tool"><svg class="i"><use href="#scada"/></svg></button><i class="hs"></i>
      <button aria-label="Variable tool"><svg class="i"><use href="#zigzag"/></svg></button><i class="hs"></i>
      <button aria-label="Pump tool"><svg class="i"><use href="#pump"/></svg></button>
      <button aria-label="Pump station tool"><svg class="i"><use href="#pump-box"/></svg></button>
      <button aria-label="Pump battery tool"><svg class="i"><use href="#pumps"/></svg></button><i class="hs"></i>
      <button aria-label="Turbine tool"><svg class="i"><use href="#turbine"/></svg></button><i class="hs wide"></i>
      <div class="with-dd"><button aria-label="Valve tool"><svg class="i"><use href="#valve"/></svg></button><i class="dd"></i></div>
      <button aria-label="Isolation valve tool"><svg class="i"><use href="#iso"/></svg></button>
      <button aria-label="Check valve tool"><svg class="i"><use href="#gpv"/></svg></button><i class="hs"></i>
      <button aria-label="Orifice tool"><svg class="i"><use href="#orifice"/></svg></button>
      <button aria-label="Discharge tool"><svg class="i"><use href="#discharge"/></svg></button><i class="hs"></i>
      <button aria-label="Surge tank tool"><svg class="i"><use href="#surge"/></svg></button>
      <button aria-label="Hydropneumatic tank tool"><svg class="i"><use href="#hydro"/></svg></button><i class="hs"></i>
      <button aria-label="Rupture disk tool"><svg class="i"><use href="#rupture"/></svg></button>
    </div>
    <div class="strip-end"><svg viewBox="0 0 32 10"><path d="M6 3l2 2-2 2zM9 3l2 2-2 2zM27 2l4 3-4 3z"/><path d="M25 2v6" stroke="#000" stroke-width="1.200"/></svg></div>
  </div>

  <div class="center">
    <section class="doc">
      <div class="doctabs">
        <button class="doctab"><svg viewBox="0 0 110 18" preserveAspectRatio="none"><path d="M0 17.500h3L16 3q3-2.500 6-2.500h84q3 0 3 3v14" fill="#fbfbfb" stroke="#999"/></svg><span>Untitled1.wtg</span></button>
        <div class="docnav"><button aria-label="Previous"><svg class="i"><use href="#prev"/></svg></button><button aria-label="Next"><svg class="i"><use href="#next"/></svg></button><button aria-label="Close document"><svg class="i"><use href="#x-thin"/></svg></button></div>
      </div>
      <div class="canvas">
        <svg viewBox="213 122 700 345" role="img" aria-label="Pipe network">
          <g fill="none" stroke="#d8d8d8">
            <path d="M374 329L576 255.500L745 325M374 329L573 395"/>
            <path d="M374 329.500h200l171-4.500 148 1" stroke="#fff" stroke-width="1.300"/>
            <path d="M573 395L745 325" stroke="#d81818"/>
            <path d="M361 323l2 2h22M363 325l7 11h7l7-11M372 324l4 5 8-3M372 330l10-1"/>
            <path d="M587 251l-5-2c-6-3-13 0-13 5s2 6 6 6 8-3 7-5h3z"/>
            <path d="M583 321h-8c-6 0-8 4-8 7s3 7 7 7 8-3 8-7l-2-2h3z"/>
            <path d="M581 385l-7 3c-6 0-8 4-8 7s3 6 7 6 7-3 7-7l-2-1 3-3z"/>
            <rect x="738.500" y="317.500" width="13" height="16" rx="2" stroke="#fff"/><path d="M739 323h12M742 320h6l-3 5z" stroke="#fff"/>
          </g>
          <circle cx="892" cy="326" r="8" fill="#fff"/><rect x="657" y="357" width="6" height="6" fill="#f00"/>
          <g fill="#f2f2f2">
            <text x="597" y="234">PUMP-3</text><text x="596" y="308">PUMP-2</text><text x="596" y="374">PUMP-1</text>
            <text x="395" y="309">Pond</text><text x="463" y="314">P-1</text><text x="648" y="311">P-5</text><text x="767" y="304">T-1</text><text x="808" y="309">P-7</text>
            <text transform="translate(459 280) rotate(-19)">P-2</text><text transform="translate(469 346) rotate(18)">P-3</text><text transform="translate(657 273) rotate(22)">P-4</text><text transform="translate(644 349) rotate(-21)" fill="#e02020">P-6</text>
          </g>
        </svg>
      </div>
    </section>
    <section class="notes">
      <div class="head"><i class="grip"></i><h2>User Notifications</h2><button aria-label="Pin notifications"><svg class="i"><use href="#pin"/></svg></button><button aria-label="Close notifications"><svg class="i"><use href="#x"/></svg></button></div>
      <div class="tabs" role="tablist"><button role="tab" aria-selected="true">User Notifications</button><button role="tab" aria-selected="false">Alerts and Alarms</button></div>
      <div class="notebody">
        <div class="notebar"><button aria-label="Details"><svg class="i"><use href="#toolbox-g"/></svg></button><button aria-label="Save notifications"><svg class="i"><use href="#save-g"/></svg></button><button aria-label="Report"><svg class="i"><use href="#doc-g"/></svg></button><button aria-label="Copy"><svg class="i"><use href="#copy-g"/></svg></button><button aria-label="Zoom to"><svg class="i"><use href="#zoom-g"/></svg></button><button aria-label="Select in drawing"><svg class="i"><use href="#sel-g"/></svg></button><i class="dd off"></i><button aria-label="Notification help"><svg class="i"><use href="#help"/></svg></button></div>
        <div class="notelist">
          <table><colgroup><col class="c1"><col class="c2"><col class="c3"><col class="c4"><col class="c5"><col class="c6"><col></colgroup>
            <thead><tr><th>Message Id</th><th>Scenario</th><th>Element Type</th><th>Element Id</th><th>Label</th><th class="num">Time (hours)</th><th>Message</th></tr></thead></table>
          <div class="hscroll note-h"><i class="tri lt"></i><i class="thumb"></i><i class="tri rt"></i></div>
        </div>
      </div>
    </section>
  </div>

  <aside class="props">
    <div class="head"><i class="grip"></i><h2>Properties - Pipe - P-6 (40)</h2><button aria-label="Pin properties"><svg class="i"><use href="#pin"/></svg></button><button aria-label="Close properties"><svg class="i"><use href="#x"/></svg></button></div>
    <div class="prow element"><span class="pick flat grow"><select aria-label="Element"><option>P-6</option></select></span><span class="duo"><button aria-label="Zoom to element"><svg class="i"><use href="#zoom-in"/></svg></button><button aria-label="Properties help"><svg class="i"><use href="#help"/></svg></button></span><span class="pick flat zoomv"><select aria-label="Zoom"><option>100%</option></select></span></div>
    <div class="prow"><span class="pick raised grow"><select aria-label="Property filter"><option>&lt;Show All&gt;</option></select></span><button class="editset" aria-label="Edit property set"><svg class="i"><use href="#edit-g"/></svg></button></div>
    <div class="prow find"><span class="pick flat grow"><input type="text" placeholder="Property Search" aria-label="Property Search"></span><button aria-label="Search"><svg class="i"><use href="#search"/></svg></button><i class="dd"></i></div>
    <div class="gridbox">
      <table class="grid"><colgroup><col class="gut"><col class="nm"><col></colgroup>
        <tbody>
        <tr class="cat"><td><i></i></td><th colspan="2">&lt;General&gt;</th></tr>
        <tr class="ro"><td></td><th>ID</th><td>40</td></tr>
        <tr class="cur"><td></td><th>Label</th><td>P-6</td></tr>
        <tr><td></td><th>Notes</th><td></td></tr>
        <tr><td></td><th>GIS-IDs</th><td>&lt;Collection: 0 items&gt;</td></tr>
        <tr><td></td><th>Hyperlinks</th><td>&lt;Collection: 0 items&gt;</td></tr>
        <tr class="ro"><td></td><th>Start Node</th><td>PUMP-1</td></tr>
        <tr class="ro"><td></td><th>Stop Node</th><td>T-1</td></tr>
        <tr><td></td><th>Node Reversal</th><td>&lt;Reverse Start/Stop&gt;</td></tr>
        <tr class="cat"><td><i></i></td><th colspan="2">&lt;Geometry&gt;</th></tr>
        <tr><td></td><th>Geometry</th><td>&lt;Collection: 2 items&gt;</td></tr>
        <tr class="cat"><td><i></i></td><th colspan="2">Active Topology</th></tr>
        <tr><td></td><th>Is Active?</th><td>True</td></tr>
        <tr class="cat"><td><i></i></td><th colspan="2">Failure History</th></tr>
        <tr><td></td><th>Number of Breaks</th><td>0</td></tr>
        <tr><td></td><th>Use Local Duration of Pipe Failur</th><td>False</td></tr>
        <tr class="ro"><td></td><th>Duration of Pipe Failure History (</th><td>0</td></tr>
        <tr><td></td><th>Pipe Break Group</th><td>&lt;None&gt;</td></tr>
        <tr><td></td><th>Cost of Break ($)</th><td>0.00</td></tr>
        <tr class="cat"><td><i></i></td><th colspan="2">Initial Settings</th></tr>
        <tr><td></td><th>Status (Initial)</th><td>Open</td></tr>
        <tr class="cat"><td><i></i></td><th colspan="2">Operational</th></tr>
        <tr><td></td><th>Controls</th><td>&lt;Collection&gt;</td></tr>
        <tr class="cat"><td><i></i></td><th colspan="2">Physical</th></tr>
        <tr><td></td><th>Zone</th><td>&lt;None&gt;</td></tr>
        <tr><td></td><th>Diameter (mm)</th><td>152.4</td></tr>
        <tr><td></td><th>Material</th><td>Ductile Iron</td></tr>
        </tbody></table>
      <div class="vscroll grid-v"><i class="tri up"></i><i class="thumb"></i><i class="tri down"></i></div>
      <svg class="cursor" viewBox="0 0 12 19"><path d="M1 1v14l3.500-3 2.500 5 2.500-1-2.500-5H11z" fill="#fff" stroke="#222"/></svg>
    </div>
    <div class="desc"><strong>Label</strong><p>Descriptive label for this element.</p></div>
  </aside>
</main>

<footer class="status"><span class="grow">Pipe:&nbsp;&nbsp; P-6 (40)</span><i class="sep"></i><span class="cell xy">X: 40.29 m, Y: 1.43 m</span><span class="cell zl">Zoom Level: 104.2 %</span><i class="sep"></i><span class="cell gocell"><svg class="i"><use href="#go"/></svg></span><i class="sep"></i><span class="cell"><svg class="i"><use href="#save"/></svg></span><i class="sep"></i><span class="cell last"></span></footer>
<div class="taskbar"></div>
</body>
</html>
```
FILE: styles.css
```css
* { box-sizing: border-box; }
html, body { height: 100%; }
body {
  margin: 0;
  display: flex;
  flex-direction: column;
  overflow: hidden;
  background: #f0f0f0;
  color: #000;
  font: 10px/15px "Liberation Sans", Arial, sans-serif;
}
button, input, select { font: inherit; color: inherit; margin: 0; }
button { border: 0; padding: 0; background: none; display: flex; align-items: center; justify-content: center; flex: none; }
h1, h2, p, ul { margin: 0; padding: 0; font-weight: normal; list-style: none; }
.defs { position: absolute; width: 0; height: 0; }
.i { width: 16px; height: 16px; flex: none; display: block; }
.grow { flex: 1; min-width: 0; }

/* title bar */
.titlebar {
  flex: none; height: 21px; display: flex; align-items: center; gap: 4px; padding-left: 0;
  background:
    linear-gradient(#0006, #0000 6px, #0000 18px, #fff6 20px),
    linear-gradient(90deg, #aab4d4 0, #c8d4e8 60px, #d2dcea 105px, #c08a98 125px, #b87482 290px, #8c2436 318px, #8a2436 1150px, #9c5060 1185px, #8c3444 1280px);
}
.titlebar h1 { flex: 1; font: 11px/16px "Open Sans", "Noto Sans", sans-serif; color: #000; }
.winbtns { display: flex; align-self: flex-start; height: 17px; margin-right: 2px; border: 1px solid #38304a; border-top: 0; border-radius: 0 0 5px 5px; overflow: hidden; }
.winbtns button { width: 26px; background: linear-gradient(#c0c8d6, #8a96ac 50%, #a0acc0); border-right: 1px solid #4a5064; }
.winbtns .close { width: 43px; border: 0; background: linear-gradient(#e0a090, #c03a28 50%, #d05a48); }
.winbtns svg { width: 16px; height: 12px; }

/* menu and tool rows */
.menubar { flex: none; height: 22px; display: flex; align-items: center; gap: 1px; padding-left: 4px; background: linear-gradient(90deg, #f4f4f4, #fafafa); }
.menubar button { padding: 0 6px; }
.grip { flex: none; width: 5px; height: 14px; background: radial-gradient(circle, #999 1px, #0000 1px) 0 0 / 5px 4px; }
.toolrow { flex: none; height: 24px; display: grid; column-gap: 3px; padding-left: 2px; background: #fafafa; }
.toolrow-1 { grid-template-columns: 163px 93px 189px 311px; }
.toolrow-2 { grid-template-columns: 203px 215px 279px 71px 149px; }
.bar { display: flex; align-items: center; justify-content: space-between; background: linear-gradient(#fdfdfd, #f8f8f8 50%, #e9e9e9); border-radius: 4px 0 0 4px; min-width: 0; }
.bar button { width: 18px; height: 18px; }
.sep { flex: none; width: 3px; height: 13px; background: linear-gradient(#bbb, #bbb) center / 1px 100% no-repeat; }
.dd { flex: none; width: 7px; height: 4px; background: #111; clip-path: polygon(0 0, 100% 0, 50% 100%); }
.dd.off { background: #999; }
.more { flex: none; align-self: stretch; width: 10px; margin-left: 4px; border-radius: 0 4px 4px 0; position: relative; background: linear-gradient(#c0c0c0, #9a9a9a); }
.more::before { content: ""; position: absolute; left: 2px; bottom: 8px; width: 6px; height: 1px; background: #000; }
.more::after { content: ""; position: absolute; left: 2px; bottom: 3px; width: 6px; height: 4px; background: #000; clip-path: polygon(0 0, 100% 0, 50% 100%); }
.more.small { align-self: flex-end; height: 13px; background: #d8d8d8; }

/* pickers */
.pick { position: relative; display: flex; }
.pick select, .pick input { appearance: none; width: 100%; height: 20px; padding: 0 2px; border: 1px solid #d0d0d0; border-top-color: #a8a8a8; border-radius: 0; background: #fff; outline: 0; }
.pick input::placeholder { color: #555; opacity: 1; }
.pick::after { content: ""; position: absolute; right: 5px; top: 8px; width: 7px; height: 4px; background: #111; clip-path: polygon(0 0, 100% 0, 50% 100%); }
.pick.raised select { height: 21px; padding: 0 2px; border: 1px solid #707070; border-radius: 3px; background: linear-gradient(#f4f4f4, #e8e8e8 50%, #d2d2d2); }
.scenario { width: 111px; }
.scenario select { height: 18px; padding: 0 3px; border: 0; background: linear-gradient(90deg, #dedede 94px, #fafafa 94px); }
.scenario::after { right: 3px; top: 7px; }

/* work area */
.work { flex: 1; min-height: 0; display: flex; border-top: 1px solid #a8a8a8; }
.left { width: 170px; flex: none; display: flex; flex-direction: column; }
.panel { display: flex; flex-direction: column; min-height: 0; }
.symb { flex: 357 1 0; padding-bottom: 5px; }
.layers { flex: 215 1 0; }
.head { flex: none; height: 23px; display: flex; align-items: center; padding: 0 3px 0 2px; background: linear-gradient(#fbfbfb, #f0f0f0); }
.layers .head, .notes .head { height: 22px; }
.head h2 { flex: 1; padding-left: 2px; font: bold 11px/15px "Liberation Sans", Arial, sans-serif; white-space: nowrap; }
.head button { width: 19px; }
.themes { display: flex; align-items: center; padding: 2px 3px 3px; gap: 14px; }
.themes .pick { width: 131px; }
.themes button { align-self: flex-end; font-size: 12px; }
.mini { flex: none; height: 24px; padding: 0 1px; justify-content: flex-start; gap: 3px; background: linear-gradient(#fafafa, #efefef); }
.mini .dd { margin-left: -3px; }
.mini .more { margin-left: auto; }
.treebox { flex: 1; min-height: 0; display: flex; flex-direction: column; background: #fff; border: 1px solid #828790; padding: 1px; }
.treewrap { flex: 1; min-height: 0; display: flex; overflow: hidden; }
.tree { flex: 1; min-width: 0; overflow: hidden; }
.tree li { display: flex; align-items: center; height: 15px; padding-left: 6px; background: linear-gradient(#bbb 50%, #0000 50%) 10px 0 / 1px 2px repeat-y; }
.layers .tree li { background: none; }
.tree label { display: flex; align-items: center; white-space: nowrap; }
.tree label span { padding: 0 2px; margin-left: 1px; }
.tree .sel { background: #ececec; }
.tree input { appearance: none; position: relative; margin: 0 -1px 0 0; width: 12px; height: 12px; border: 1px solid #8a90a0; background: linear-gradient(135deg, #ccd0dc, #f4f4f8); }
.tree input::after { content: ""; position: absolute; left: 3px; top: 0; width: 3px; height: 6px; border: solid #343c84; border-width: 0 2px 2px 0; transform: rotate(38deg); }
.exp { flex: none; width: 9px; height: 9px; margin-right: 6px; border: 1px solid #999; background: linear-gradient(#223, #223) center / 5px 1px no-repeat, linear-gradient(#223, #223) center / 1px 5px no-repeat, #fff; }
.exp.leaf { border: 0; height: 1px; margin: 0 2px 0 4px; background: linear-gradient(90deg, #999 50%, #0000 50%) 0 0 / 2px 1px; }

/* scroll bars */
.vscroll, .hscroll { flex: none; display: flex; align-items: center; background: #f1f1f1; }
.vscroll { flex-direction: column; width: 14px; padding: 5px 0; }
.hscroll { height: 14px; padding: 0 5px; }
.thumb { flex: none; border: 1px solid #979797; border-radius: 2px; }
.vscroll .thumb { width: 14px; background: repeating-linear-gradient(#666 0 1px, #0000 1px 3px) center / 7px 8px no-repeat, linear-gradient(90deg, #f4f4f4, #d0d0d0); }
.hscroll .thumb { height: 14px; background: repeating-linear-gradient(90deg, #666 0 1px, #0000 1px 3px) center / 8px 6px no-repeat, linear-gradient(#f4f4f4, #d0d0d0); }
.tri { flex: none; background: #444; }
.tri.up { width: 7px; height: 4px; clip-path: polygon(50% 0, 100% 100%, 0 100%); margin: 1px 0 8px; }
.tri.down { width: 7px; height: 4px; clip-path: polygon(0 0, 100% 0, 50% 100%); margin-top: auto; }
.tri.lt { width: 4px; height: 7px; clip-path: polygon(100% 0, 100% 100%, 0 50%); }
.tri.rt { width: 4px; height: 7px; clip-path: polygon(0 0, 100% 50%, 0 100%); margin-left: auto; }
.tree-v .thumb { height: 131px; }
.tree-v { margin-right: 1px; }
.tree-h { padding-right: 21px; }
.tree-h .thumb { width: 89px; margin-left: 8px; }
.note-h .thumb { width: 362px; margin-left: 8px; }
.grid-v .thumb { height: 61px; }

/* drawing tools */
.strip { width: 32px; flex: none; margin: 0 2px 0 5px; display: flex; flex-direction: column; align-items: center; background: linear-gradient(90deg, #fdfdfd, #f2f2f2); }
.grip-h { width: 21px; height: 3px; margin: 3px 0 4px; background: radial-gradient(circle, #999 1px, #0000 1px) 0 0 / 4px 3px; }
.tools { flex: 0 1 528px; min-height: 0; display: flex; flex-direction: column; align-items: center; justify-content: space-between; }
.tools button { width: 18px; height: 18px; }
.tools .on { background: #d8ecff; outline: 1px solid #66a8e0; outline-offset: 1px; }
.hs { width: 12px; height: 3px; background: linear-gradient(#aaa, #aaa) center / 100% 1px no-repeat; }
.hs.wide { width: 22px; }
.with-dd { display: flex; align-items: center; gap: 3px; }
.with-dd .dd { width: 5px; height: 3px; }
.strip-end { margin-top: auto; width: 100%; height: 10px; background: linear-gradient(#c4c4c4, #a8a8a8); }
.strip-end svg { display: block; width: 32px; height: 10px; }

/* document */
.center { flex: 1; min-width: 0; display: flex; flex-direction: column; }
.doc { flex: 380 1 0; min-height: 0; display: flex; flex-direction: column; border: 1px solid #999; border-top: 0; background: #f0f0f0; margin-bottom: 5px; }
.doctabs { flex: none; height: 26px; display: flex; align-items: flex-end; justify-content: space-between; background: linear-gradient(#f2f2f2, #fdfdfd); border-bottom: 1px solid #999; margin-bottom: 4px; }
.doctab { position: relative; width: 112px; height: 18px; margin-bottom: -1px; padding-left: 20px; font: bold 11px/15px "Liberation Sans", Arial, sans-serif; }
.doctab svg { position: absolute; inset: 0; width: 100%; height: 100%; }
.doctab span { position: relative; }
.docnav { display: flex; padding-bottom: 5px; margin-right: 2px; }
.docnav button { width: 14px; }
.canvas { flex: 1; min-height: 0; margin: 0 4px 4px 3px; background: #000; }
.canvas svg { display: block; width: 100%; height: 100%; font: 14px "Liberation Sans", Arial, sans-serif; }

/* notifications */
.notes { flex: 187 1 0; min-height: 0; display: flex; flex-direction: column; }
.tabs { flex: none; display: flex; align-items: flex-end; height: 20px; margin-bottom: -1px; position: relative; }
.tabs button { height: 18px; padding: 0 3px; border: 1px solid #909090; background: linear-gradient(#f0f0f0, #d8d8d8); }
.tabs button[aria-selected="true"] { height: 20px; padding: 0 6px; background: #fff; border-bottom-color: #fff; border-right: 0; }
.notebody { flex: 1; min-height: 0; display: flex; flex-direction: column; border: 1px solid #8c8c8c; background: #fbfbfb; padding: 4px 6px 6px 5px; margin-bottom: 1px; }
.notebar { flex: none; height: 24px; display: flex; align-items: center; gap: 5px; padding-left: 2px; background: linear-gradient(#fbfbfb, #ececec); }
.notebar .dd { width: 5px; height: 3px; margin: 0 5px 0 -5px; }
.notelist { flex: 1; min-height: 0; display: flex; flex-direction: column; justify-content: space-between; background: #fff; border: 1px solid #828790; padding: 1px; }
table { border-collapse: collapse; table-layout: fixed; width: 100%; }
th, td { padding: 0; font-weight: normal; text-align: left; overflow: hidden; white-space: nowrap; }
.notelist th { height: 22px; padding: 2px 4px 0 5px; border-right: 1px solid #e4e4ea; border-bottom: 1px solid #d8d8de; background: linear-gradient(#fff, #f4f4f8); }
.notelist th.num { text-align: right; }
.notelist th:last-child { border-right: 0; }
.c1 { width: 77px; } .c2 { width: 116px; } .c3 { width: 115px; } .c4 { width: 62px; } .c5 { width: 76px; } .c6 { width: 116px; }

/* properties */
.props { width: 359px; flex: none; margin-left: 3px; display: flex; flex-direction: column; background: #f0f0f0; padding-left: 1px; }
.props .head { background: #d3d4d8; padding-left: 1px; margin-left: -1px; padding-right: 0; }
.props .head h2 { padding-left: 4px; }
.prow { flex: none; display: flex; align-items: center; padding-right: 2px; }
.element { padding: 7px 4px 7px 7px; }
.duo { display: flex; gap: 6px; padding: 0 8px; }
.zoomv { width: 61px; }
.find { padding: 5px 4px 3px 0; }
.find .pick { margin-right: 3px; }
.find .dd { width: 5px; height: 3px; margin-left: 4px; }
.editset { margin-left: 9px; margin-right: -2px; }
.gridbox { position: relative; flex: 1; min-height: 0; display: flex; align-items: stretch; overflow: hidden; border: 1px solid #a0a0a0; border-right: 0; background: #f0f0f0; }
.grid { flex: 1; height: 0; }
.grid tr { height: 15px; background: #fff; }
.gut { width: 12px; } .nm { width: 157px; }
.grid td, .grid th { height: 15px; line-height: 14px; border-bottom: 1px solid #f0f0f0; }
.grid td:first-child { background: #f0f0f0; }
.grid th { padding-left: 3px; border-right: 1px solid #f0f0f0; }
.grid td:last-child { padding-left: 3px; }
.grid .cat, .grid .cur th { background: #efefef; }
.grid .cat th { padding-left: 6px; font: bold 11px/14px "Liberation Sans", Arial, sans-serif; }
.grid .cat i { display: block; width: 9px; height: 9px; margin-left: 1px; border: 1px solid #444; background: linear-gradient(#000, #000) center / 5px 1px no-repeat; }
.grid .ro th { color: #999; }
.cursor { position: absolute; left: 304px; top: 40px; width: 12px; height: 19px; }
.desc { flex: none; height: 56px; margin-top: 3px; padding: 2px 3px; border: 1px solid #a8a8a8; border-right: 0; font-size: 11px; }
.desc strong { display: block; font: bold 11px/14px "Liberation Sans", Arial, sans-serif; }

/* status */
.status { flex: none; height: 21px; display: flex; align-items: center; padding: 0 0 0 4px; gap: 3px; border-top: 1px solid #d0d0d0; background: #f0f0f0; border-bottom: 1px solid #fff; white-space: nowrap; }
.cell { flex: none; height: 17px; padding: 0 2px; border: 1px solid #dcdcdc; display: flex; align-items: center; }
.xy { width: 177px; }
.zl { width: 100px; }
.gocell { width: 56px; }
.last { width: 22px; }
.taskbar {
  flex: none; height: 36px;
  background:
    linear-gradient(#aaa9 0, #5556 6px, #0000 14px, #0000 24px, #0006),
    linear-gradient(90deg, #203038 0, #2c6c78 22px, #101820 48px, #182028 64px, #94987c 95px, #202428 120px, #6a5850 150px, #141a20 180px, #6a80ac 214px, #141820 240px, #941c20 272px, #101820 303px, #4c686c 333px, #101418 354px, #8c2c34 385px, #5a4028 400px, #202820 418px, #6c9c38 448px, #182018 478px, #cc5c54 505px, #4a2c34 525px, #5c7c98 560px, #303848 585px, #080c14 605px, #060a12 1120px, #101218 1180px, #343840 1236px, #14161c 1280px);
}
```
